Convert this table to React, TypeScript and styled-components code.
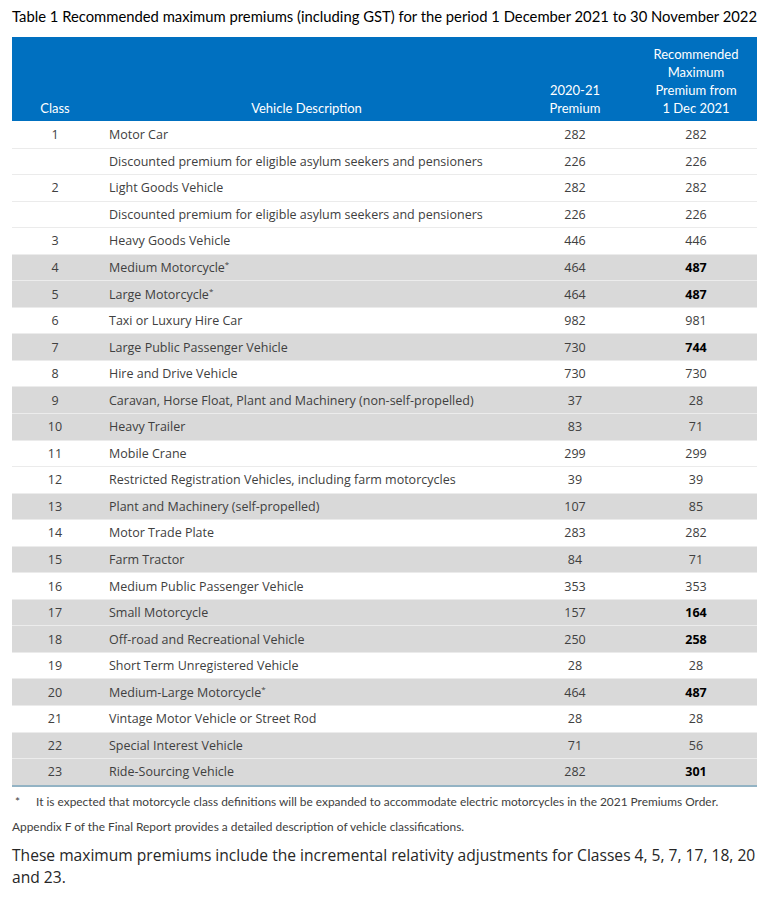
import * as React from 'react';
import styled, { createGlobalStyle } from 'styled-components';

const GlobalStyle = createGlobalStyle`
  body {
    margin: 0;
    background: #fff;
  }
`;

interface Row {
  cls?: string;
  desc: string;
  star?: boolean;
  prev: string;
  next: string;
  shaded?: boolean;
}

const rows: Row[] = [
  { cls: '1', desc: 'Motor Car', prev: '282', next: '282' },
  { desc: 'Discounted premium for eligible asylum seekers and pensioners', prev: '226', next: '226' },
  { cls: '2', desc: 'Light Goods Vehicle', prev: '282', next: '282' },
  { desc: 'Discounted premium for eligible asylum seekers and pensioners', prev: '226', next: '226' },
  { cls: '3', desc: 'Heavy Goods Vehicle', prev: '446', next: '446' },
  { cls: '4', desc: 'Medium Motorcycle', star: true, prev: '464', next: '487', shaded: true },
  { cls: '5', desc: 'Large Motorcycle', star: true, prev: '464', next: '487', shaded: true },
  { cls: '6', desc: 'Taxi or Luxury Hire Car', prev: '982', next: '981' },
  { cls: '7', desc: 'Large Public Passenger Vehicle', prev: '730', next: '744', shaded: true },
  { cls: '8', desc: 'Hire and Drive Vehicle', prev: '730', next: '730' },
  { cls: '9', desc: 'Caravan, Horse Float, Plant and Machinery (non-self-propelled)', prev: '37', next: '28', shaded: true },
  { cls: '10', desc: 'Heavy Trailer', prev: '83', next: '71', shaded: true },
  { cls: '11', desc: 'Mobile Crane', prev: '299', next: '299' },
  { cls: '12', desc: 'Restricted Registration Vehicles, including farm motorcycles', prev: '39', next: '39' },
  { cls: '13', desc: 'Plant and Machinery (self-propelled)', prev: '107', next: '85', shaded: true },
  { cls: '14', desc: 'Motor Trade Plate', prev: '283', next: '282' },
  { cls: '15', desc: 'Farm Tractor', prev: '84', next: '71', shaded: true },
  { cls: '16', desc: 'Medium Public Passenger Vehicle', prev: '353', next: '353' },
  { cls: '17', desc: 'Small Motorcycle', prev: '157', next: '164', shaded: true },
  { cls: '18', desc: 'Off-road and Recreational Vehicle', prev: '250', next: '258', shaded: true },
  { cls: '19', desc: 'Short Term Unregistered Vehicle', prev: '28', next: '28' },
  { cls: '20', desc: 'Medium-Large Motorcycle', star: true, prev: '464', next: '487', shaded: true },
  { cls: '21', desc: 'Vintage Motor Vehicle or Street Rod', prev: '28', next: '28' },
  { cls: '22', desc: 'Special Interest Vehicle', prev: '71', next: '56', shaded: true },
  { cls: '23', desc: 'Ride-Sourcing Vehicle', prev: '282', next: '301', shaded: true },
];

const boldClasses = ['4', '5', '7', '17', '18', '20', '23'];

const Page = styled.div`
  width: 745px;
  padding: 6px 0 0 12px;
`;

const Title = styled.h1`
  margin: 0 0 11px;
  font-family: Lato, 'Liberation Sans', sans-serif;
  font-size: 14.8px;
  font-weight: 400;
  line-height: 20px;
  color: #000;
  white-space: nowrap;
`;

const Grid = styled.div`
  display: grid;
  grid-template-columns: 86px 417px 120px 122px;
`;

const Head = styled(Grid)`
  background: #0070c0;
  height: 84px;
  align-items: end;
  padding-bottom: 4px;
  box-sizing: border-box;
  font-family: Lato, 'Liberation Sans', sans-serif;
  font-size: 13px;
  line-height: 18px;
  color: #fff;
`;

const HeadCell = styled.div`
  text-align: center;
`;

const Body = styled.div`
  border-bottom: 2px solid #93b3c4;
`;

const BodyRow = styled(Grid)<{ $shaded?: boolean }>`
  height: 26.56px;
  align-items: center;
  background: ${(p) => (p.$shaded ? '#d9d9d9' : '#fff')};
  border-top: 1px solid ${(p) => (p.$shaded ? '#ececec' : '#ebebeb')};
  box-sizing: border-box;
  font-family: 'Open Sans', sans-serif;
  font-size: 12.5px;
  color: #404040;
  &:first-child {
    border-top: none;
  }
`;

const Cell = styled.div<{ $left?: boolean; $bold?: boolean }>`
  text-align: ${(p) => (p.$left ? 'left' : 'center')};
  padding-left: ${(p) => (p.$left ? '11px' : '0')};
  font-weight: ${(p) => (p.$bold ? 700 : 400)};
  color: ${(p) => (p.$bold ? '#000' : '#404040')};
  white-space: nowrap;
`;

const Star = styled.sup`
  font-size: 8px;
  vertical-align: 5px;
  line-height: 0;
`;

const Note = styled.p`
  margin: 7px 0 0;
  font-family: Lato, 'Liberation Sans', sans-serif;
  font-size: 11.9px;
  line-height: 16px;
  color: #404040;
  display: flex;
  white-space: nowrap;

  & + & {
    margin-top: 9px;
  }
`;

const NoteMark = styled.span`
  width: 24px;
  padding-left: 3px;
  box-sizing: border-box;
`;

const Paragraph = styled.p`
  margin: 9px 0 0;
  font-family: 'Open Sans', sans-serif;
  font-size: 15.6px;
  line-height: 22px;
  color: #262626;
`;

export default function App() {
  return (
    <>
      <GlobalStyle />
      <Page>
        <Title>
          Table 1 Recommended maximum premiums (including GST) for the period 1 December 2021 to 30 November 2022
        </Title>
        <Head>
          <HeadCell>Class</HeadCell>
          <HeadCell>Vehicle Description</HeadCell>
          <HeadCell>
            2020-21
            <br />
            Premium
          </HeadCell>
          <HeadCell>
            Recommended
            <br />
            Maximum
            <br />
            Premium from
            <br />1 Dec 2021
          </HeadCell>
        </Head>
        <Body>
          {rows.map((r, i) => (
            <BodyRow key={i} $shaded={r.shaded}>
              <Cell>{r.cls ?? ''}</Cell>
              <Cell $left>
                {r.desc}
                {r.star && <Star>*</Star>}
              </Cell>
              <Cell>{r.prev}</Cell>
              <Cell $bold={!!r.cls && boldClasses.includes(r.cls)}>{r.next}</Cell>
            </BodyRow>
          ))}
        </Body>
        <Note>
          <NoteMark>*</NoteMark>
          It is expected that motorcycle class definitions will be expanded to accommodate electric motorcycles in the 2021 Premiums Order.
        </Note>
        <Note>Appendix F of the Final Report provides a detailed description of vehicle classifications.</Note>
        <Paragraph>
          These maximum premiums include the incremental relativity adjustments for Classes 4, 5, 7, 17, 18, 20 and 23.
        </Paragraph>
      </Page>
    </>
  );
}
